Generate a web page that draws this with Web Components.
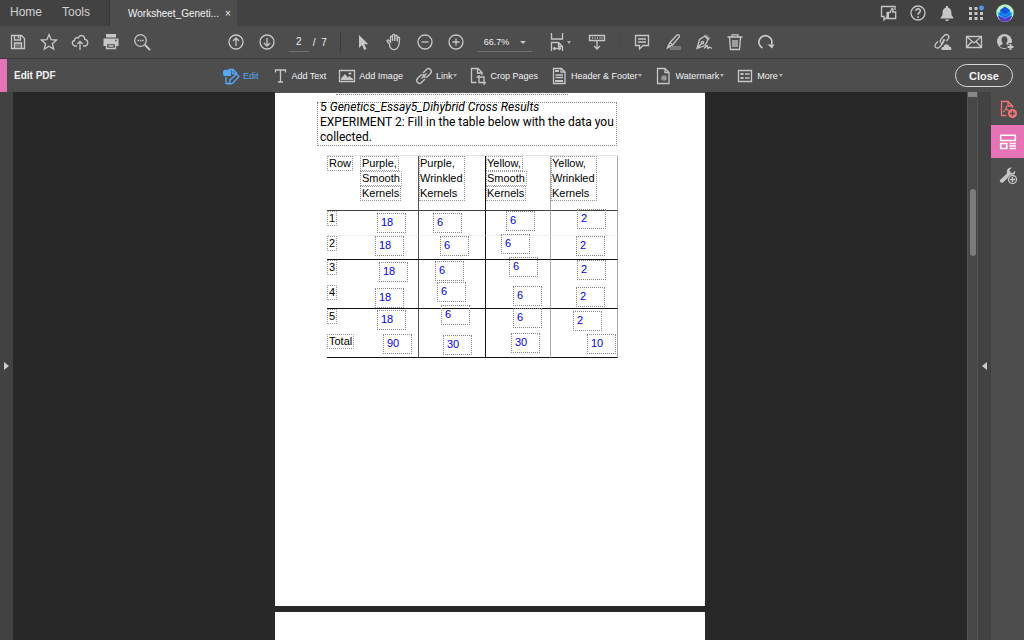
<!DOCTYPE html>
<html lang="en">
<head>
<meta charset="utf-8">
<title>Worksheet_Genetics.pdf</title>
<style>
    html, body {
        margin: 0;
        height: 100%;
        overflow: hidden;
        background-color: #282828;
        font-family: "Liberation Sans", Arial, sans-serif;
    }
</style>
</head>
<body>
<pdf-app></pdf-app>

<script>
// every icon is drawn in an 18x18 box
const icons = {
    save: `<path d="M2.5 2.5h10l3 3v10h-13z"/><path d="M5.5 2.5v4.500h6v-4.500M9.500 3v2.500"/><path class="dim" d="M5 10h8v5H5z"/><path d="M5.500 15v-5h7v5"/>`,
    star: `<path d="M9 1.600l2.100 5.100 5.500.4-4.200 3.600 1.300 5.400L9 13.200l-4.700 2.900 1.300-5.400L1.400 7.100l5.500-.4z"/>`,
    upload: `<path d="M6 13H4.300C.500 12.500.600 8 3.600 7.500 3.400 5 6 4 7.300 5 9 .8 14 2.500 13.700 6.300c4 .3 4 6.200.3 6.700h-2"/><path d="M9 17V8.500M6.300 11L9 8.300 11.700 11"/>`,
    print: `<path class="fill" d="M4 1h10v3.500H4zM1.500 5.500h15V13H14v-2.500H4V13H1.500z"/><path d="M4.500 10.500h9v5h-9zM6.500 13h5"/><path class="cut" d="M13 7.500h1.500"/>`,
    search: `<circle cx="7.500" cy="7.500" r="5.800"/><path d="M4.500 7.500h1.500M6.800 7.500h1.500M9.100 7.500h1.500"/><path class="thick" d="M12 12l5 5"/>`,
    up: `<circle cx="9" cy="9" r="7"/><path d="M9 13V5.500M6 8l3-3 3 3"/>`,
    down: `<circle cx="9" cy="9" r="7"/><path d="M9 5v7.500M6 10l3 3 3-3"/>`,
    pointer: `<path class="fill" d="M5 2v13l3-3 2.200 5 2.300-1-2.200-4.800h4z"/>`,
    hand: `<path d="M4.500 11L2.300 8.500c-1-1 .5-2 1.400-1.300L5.500 9V4.200c0-1.500 2-1.500 2 0V8 2.500c0-1.500 2.200-1.500 2.200 0V8l.2-5c.2-1.300 2.200-1.300 2.200 0V8.500l.5-3.500c.4-1.200 2-1 2 .3-.3 5-.4 10-4.600 11.200-4 .9-5.500-2.500-5.500-5.500z"/>`,
    minus: `<circle cx="9" cy="9" r="7"/><path d="M5.500 9h7"/>`,
    plus: `<circle cx="9" cy="9" r="7"/><path d="M5.500 9h7M9 5.500v7"/>`,
    fit: `<path d="M2.500 0v6h11V0M2.500 18V9.500h7l4 4V18M9.500 9.500v4h4M4.500 15.500h7M6 14l-1.500 1.500L6 17M10 14l1.500 1.500L10 17"/>`,
    keyboard: `<path d="M1.500 2.500h15v5h-15z"/><path d="M4 5h1M6.500 5h1M9 5h1M11.500 5h1M13.500 5h1"/><path d="M9 7.500V15M6 13l3 3 3-3"/>`,
    comment: `<path d="M2.500 2.500h13v10H10L6.500 16v-3.500h-4z"/><path d="M5 6h8M5 9h8"/>`,
    highlight: `<path class="dim" d="M6 13h11v4H6z"/><path d="M6 9.500L13 2c1.400-1 3 .5 2.300 1.800L8.500 12zM6 9.500L4 13.500l4.500-1.500"/><path class="fill" d="M4.500 12l2.500 1.800L2 16.500z"/>`,
    sign: `<path class="dim" d="M11 1l5 4-3 2-4-3z"/><path d="M9.500 2.500l4.500 4M10 3L4.500 6.500 2 15.500l8-3 3-6zM2 15.500l5-5.500"/><circle cx="7.500" cy="9.500" r="1.200"/><path d="M9 15.500l3-3 1 3 1.500-1.500 2.500 1.500"/>`,
    trash: `<path d="M1.500 4h15M6 4V1.800h6V4M3.500 4.500l1 12h9l1-12M7 7v7M9 7v7M11 7v7"/>`,
    rotate: `<path d="M5.500 15a6.500 6.500 0 1 1 9-3.500" style="stroke-width: 1.700"/><path class="fill" d="M10.500 11.500h7l-2.500 4z"/>`,
    linkCloud: `<path d="M6.500 9.500c-1-2 .2-3 1-4l2.800-3c2.400-2.500 6 .6 4 3.200L12.500 8M9 6.500c1.500 2 .4 3.300-1 4.700L5.500 14C3 16.500-.5 13.700 1.700 11L4 8.500M7 11l4-4.500"/><path class="fill" d="M8 17c-1.500-1 0-3.500 1.500-3 .5-3.500 5-3.500 5.500-.5 2.500 0 3 2.500 2 3.500z"/>`,
    mail: `<path d="M1.500 3.500h15v11h-15zM1.500 3.500L9 10l7.500-6.500M1.500 14.500l5.500-6M16.500 14.500l-5.500-6"/>`,
    addUser: `<circle class="fill" cx="8.500" cy="8.500" r="7.500"/><path class="cutFill" d="M5.500 6.500c0-4.500 6-4.500 6 0 0 2-.7 3-1.300 4 0 1.500 2 1.200 3.300 2.500-2.500 2.800-7.500 2.800-10 0 1.300-1.300 3.300-1 3.300-2.500-.6-1-1.300-2-1.300-4z"/><path class="cut wide" d="M14.500 10v8M10.500 14h8"/><path class="thick" d="M14.500 11v6M11.500 14h6"/>`,
    feedback: `<path d="M15 6V2.500H1.500v10H4V16l3.500-3.500"/><path d="M7.500 8.500H10L12 4.500c1.400 0 1.200 1.600.7 3.500h3v6.500H7.500z"/><path class="fill" d="M6.500 8H9v7H6.500z"/>`,
    help: `<circle cx="9" cy="9" r="7"/><path class="thick" d="M6.700 7c.2-3.200 5-2.700 4.500.2-.3 1.400-2.200 1.700-2.200 3.500M9 12.300v1.700" style="stroke-width: 1.600"/>`,
    bell: `<path class="fill" d="M8 2h2v1.500c3 1 3.500 3 3.500 7.500l2 3v.500h-13V14l2-3C4.500 6.500 5 4.500 8 3.500zM7 15.500h4L10 17H8z"/>`,
    apps: `<path class="fill" d="M2 3h3v3H2zM7.500 3h3v3h-3zM2 8h3v3H2zM7.500 8h3v3h-3zM13 8h3v3h-3zM2 13h3v3H2zM7.500 13h3v3h-3zM13 13h3v3h-3z"/><circle cx="14.500" cy="4" r="2.400" fill="#4b9bf5" stroke="none"/>`,
    avatar: `<g stroke="none"><circle cx="9" cy="9" r="8.700" fill="#b9f5c4"/><path fill="#25bdf0" d="M1.500 9l7.500-5 7.500 5-2 5H3.500z"/><path fill="#1455dd" d="M9 2.500l5 3.500-1 3 2.500 1-6.500 4-6.500-4L5 9 4 6z"/><path fill="#5a34cc" d="M2 11.500l7 3 7-3c-.5 3.500-3 6.200-7 6.200s-6.500-2.700-7-6.200z"/><path fill="#207fe8" d="M5 8l4 2 4-2v3l-4 2-4-2z"/></g>`,
    edit: `<path class="fill" d="M1 5c0-3 4-2 5.500-2H9v6H3C1 9 1 7.500 1 5z"/><path d="M6.500 2.500H11l4 4M10.500 2.500v4h4M4 10v6.500h4.500M8 13l6.500-6 2.500 2.500-6.500 7L7.500 17z"/>`,
    text: `<path d="M4.500 5.500V3h10v2.500M9.500 3v12M7 15h5"/>`,
    image: `<path d="M1.500 3.500h15v11h-15z"/><path class="fill" d="M3 13v-1.500L7 7l3 3.500 1.500-1.500 3.500 3V13zM12.500 5v1h1v1h-1v1h-1V7h-1V6h1V5z"/>`,
    link: `<path d="M8 6l3.500-3.500c2.500-2.500 6.500 1 4 4L12.500 9.500c-1.500 1.500-4 .8-4-1M10 12l-3.500 3.500c-2.500 2.500-6.500-1-4-4L5.500 8.500c1.500-1.500 4-.8 4 1M6.500 11.500l5-5"/>`,
    crop: `<path d="M7.500 15.500h-5v-14H9l4 4V8M8.500 1.500V6H13M7.500 10h7.500v8M10 8v7.500h7"/>`,
    header: `<path d="M3.500 1.500h8l3.500 3.500v11.500H3.500z"/><path d="M11 1.500V5h4"/><path class="fill" d="M5 3h4v2H5zM5 13h8v2H5z"/><path d="M5.500 8h7.500M5.500 10.500h7.500"/>`,
    watermark: `<path d="M3.500 1.500h7.500l4 4v11H3.500z"/><path d="M11 1.500V5.500h4"/><path class="faint" d="M10 8v6M7 11h6M7.800 9l4.300 4M12.100 9l-4.300 4"/>`,
    more: `<path d="M2.500 3.500h13v11h-13z"/><path class="fill" d="M4.500 6h3v2h-3zM4.500 10h3v2h-3z"/><path d="M9 7h4.500M9 11h4.500"/>`,
    createPdf: `<path d="M7.500 15.500h-5v-14H9l4.500 4.500v2M9 1.500V6h4.500"/><path d="M4 12c2-1 3.500-4 3.500-6M7 8c.5 2 1.500 2.500 3 3"/><circle class="fill" cx="13.500" cy="13.500" r="4.500"/><path class="cut" d="M11 13.500h5M13.500 11v5"/>`,
    organize: `<path d="M1.700 2.200h14.600v5.300H1.700zM1.700 10.500h6v5h-6z" style="stroke-width: 1.600"/><path d="M10.500 10.500H17M10.500 13H17M10.500 15.500H17"/>`,
    moreTools: `<path class="fill" d="M1 14L8 7.500C7 4 9.500 1 13 1.500L10.500 4l1 2.500 2.500.5 2-2.500c1 3-1.500 5.500-4.500 5L4 16.500C2 17.500 0 15.500 1 14z"/><circle class="cutFill" cx="13.500" cy="13.500" r="5"/><circle cx="13.500" cy="13.500" r="4"/><path d="M11 13.500h5M13.500 11v5"/>`
};

class AppIcon extends HTMLElement {
    constructor () {
        super ();
        this.attachShadow ({mode: "open"});
    }

    connectedCallback () {
        this.shadowRoot.innerHTML = `
        <style>
            :host { display: block; flex: none; width: 18px; height: 18px; }
            svg { display: block; width: 100%; height: 100%; fill: none; stroke: currentColor; stroke-width: 1.3; overflow: visible; }
            .fill { fill: currentColor; stroke: none; }
            .dim { fill: #777777; stroke: none; }
            .faint { stroke: #999999; }
            .thick { stroke-width: 2; }
            .cut { stroke: var(--cut, #4d4d4d); }
            .wide { stroke-width: 4; }
            .cutFill { fill: var(--cut, #4d4d4d); stroke: none; }
        </style>
        <svg viewBox="0 0 18 18" aria-hidden="true">${icons[this.getAttribute ("name")]}</svg>`;
    }
}

// button with an icon, an optional slotted text and an optional menu arrow
class ToolButton extends HTMLElement {
    constructor () {
        super ();
        this.attachShadow ({mode: "open"});
    }

    connectedCallback () {
        const label = this.getAttribute ("label");
        this.shadowRoot.innerHTML = `
        <style>
            :host { display: block; flex: none; color: #c6c6c6; }
            :host([menu]) .arrow { display: block; }
            button {
                display: flex;
                align-items: center;
                gap: var(--gap, 0px);
                padding: 0;
                border: 0;
                background: none;
                color: inherit;
                font: inherit;
                cursor: pointer;
            }
            .text { color: var(--text, inherit); white-space: nowrap; display: flex; align-items: center; gap: 1px; }
            .arrow {
                display: none;
                border: 2px solid transparent;
                border-top: 3px solid #b0b0b0;
                border-bottom: 0;
            }
        </style>
        <button type="button" ${label ? `aria-label="${label}"` : ""}>
            <app-icon name="${this.getAttribute ("icon")}"></app-icon>
            <span class="text"><slot></slot><span class="arrow"></span></span>
        </button>`;
    }
}

class TabBar extends HTMLElement {
    constructor () {
        super ();
        this.attachShadow ({mode: "open"});
        this.shadowRoot.innerHTML = `
        <style>
            :host { display: flex; height: 26px; background-color: #424242; color: #d0d0d0; font-size: 12px; }
            nav { display: flex; gap: 20px; padding: 0 19px 0 10px; align-items: center; }
            nav a { color: inherit; text-decoration: none; line-height: 25px; height: 26px; }
            .tab {
                display: flex;
                align-items: center;
                gap: 5px;
                padding: 0 5px 0 18px;
                border-left: 1px solid #373737;
                background-color: #4d4d4d;
                color: #f2f2f2;
                font-size: 10px;
            }
            .tab button { border: 0; padding: 0; width: 8px; background: none; color: inherit; font: inherit; }
            .right { display: flex; align-items: center; gap: 11px; margin-left: auto; padding-right: 10px; --cut: #424242; }
        </style>
        <nav><a href="#home">Home</a><a href="#tools">Tools</a></nav>
        <div class="tab"><span>Worksheet_Geneti...</span><button type="button" aria-label="Close tab">×</button></div>
        <div class="right">
            <tool-button icon="feedback" label="Feedback"></tool-button>
            <tool-button icon="help" label="Help"></tool-button>
            <tool-button icon="bell" label="Notifications"></tool-button>
            <tool-button icon="apps" label="Apps"></tool-button>
            <tool-button icon="avatar" label="Account"></tool-button>
        </div>`;
    }
}

class MainToolbar extends HTMLElement {
    constructor () {
        super ();
        this.attachShadow ({mode: "open"});
        this.shadowRoot.innerHTML = `
        <style>
            :host {
                display: flex;
                align-items: center;
                height: 32px;
                padding: 0 10px 0 9px;
                background-color: #4d4d4d;
                border-bottom: 1px solid #3b3b3b;
                color: #eeeeee;
                font-size: 10px;
            }
            .group { display: flex; align-items: center; gap: 13px; }
            .space { flex: 10; }
            .space.large { flex: 21; }
            .page, .zoom { display: flex; align-items: center; }
            .page { gap: 4px; white-space: pre; }
            input, select {
                box-sizing: border-box;
                height: 20px;
                border: 0;
                border-bottom: 1px solid #717171;
                padding: 0;
                background: none;
                color: inherit;
                font: inherit;
                appearance: none;
            }
            input { width: 20px; text-align: center; }
            select { width: 54px; padding-left: 6px; font-size: 9px; }
            .zoom { position: relative; }
            .zoom::after {
                content: "";
                position: absolute;
                right: 6px;
                border: 3px solid transparent;
                border-top-color: #c6c6c6;
                border-bottom: 0;
            }
            tool-button[menu] { margin: 0 4px; }
            .line { width: 1px; height: 20px; background-color: #3d3d3d; }
            .line.light { background-color: #484848; }
        </style>
        <div class="group">
            <tool-button icon="save" label="Save"></tool-button>
            <tool-button icon="star" label="Star"></tool-button>
            <tool-button icon="upload" label="Upload"></tool-button>
            <tool-button icon="print" label="Print"></tool-button>
            <tool-button icon="search" label="Find"></tool-button>
        </div>
        <div class="space"></div>
        <div class="group">
            <tool-button icon="up" label="Previous page"></tool-button>
            <tool-button icon="down" label="Next page"></tool-button>
            <div class="page"><input aria-label="Page" value="2"><span>/  7</span></div>
            <div class="line"></div>
            <tool-button icon="pointer" label="Select"></tool-button>
            <tool-button icon="hand" label="Pan"></tool-button>
            <tool-button icon="minus" label="Zoom out"></tool-button>
            <tool-button icon="plus" label="Zoom in"></tool-button>
            <div class="zoom"><select aria-label="Zoom"><option>66.7%</option></select></div>
            <tool-button icon="fit" label="Fit width" menu></tool-button>
            <tool-button icon="keyboard" label="Page controls"></tool-button>
            <div class="line light"></div>
            <tool-button icon="comment" label="Comment"></tool-button>
            <tool-button icon="highlight" label="Highlight"></tool-button>
            <tool-button icon="sign" label="Sign"></tool-button>
            <tool-button icon="trash" label="Delete"></tool-button>
            <tool-button icon="rotate" label="Rotate"></tool-button>
        </div>
        <div class="space large"></div>
        <div class="group">
            <tool-button icon="linkCloud" label="Share link"></tool-button>
            <tool-button icon="mail" label="Send by email"></tool-button>
            <tool-button icon="addUser" label="Invite"></tool-button>
        </div>`;
    }
}

class EditBar extends HTMLElement {
    constructor () {
        super ();
        this.attachShadow ({mode: "open"});
        this.shadowRoot.innerHTML = `
        <style>
            :host {
                display: flex;
                align-items: center;
                justify-content: space-between;
                height: 33px;
                padding: 0 11px 0 7px;
                border-left: 7px solid #e573b5;
                background-color: #4d4d4d;
                color: #f2f2f2;
                font-size: 9px;
            }
            h1 { margin: 0; font-size: 10px; }
            .tools { display: flex; gap: 12px; margin-right: 6px; --gap: 3px; --text: #f2f2f2; }
            .active { color: #55a9f8; --text: #55a9f8; }
            .close {
                width: 58px;
                height: 23px;
                padding: 0;
                border: 1px solid #d8d8d8;
                border-radius: 12px;
                background: none;
                color: inherit;
                font: bold 11px "Liberation Sans", Arial, sans-serif;
            }
        </style>
        <h1>Edit PDF</h1>
        <div class="tools">
            <tool-button class="active" icon="edit">Edit</tool-button>
            <tool-button icon="text">Add Text</tool-button>
            <tool-button icon="image">Add Image</tool-button>
            <tool-button icon="link" menu>Link</tool-button>
            <tool-button icon="crop">Crop Pages</tool-button>
            <tool-button icon="header" menu>Header &amp; Footer</tool-button>
            <tool-button icon="watermark" menu>Watermark</tool-button>
            <tool-button icon="more" menu>More</tool-button>
        </div>
        <button class="close" type="button">Close</button>`;
    }
}

// each value is a text box dropped freely on the page : [text, x, y] from its cell corner
const rows = [
    ["1", ["18", 17, 2], ["6", 14, 2], ["6", 20, 0], ["2", 26, -2]],
    ["2", ["18", 15, 0], ["6", 21, 0], ["6", 15, -2], ["2", 25, 0]],
    ["3", ["18", 19, 2], ["6", 16, 1], ["6", 23, -3], ["2", 26, 0]],
    ["4", ["18", 15, 3], ["6", 18, -3], ["6", 27, 1], ["2", 25, 2]],
    ["5", ["18", 17, 1], ["6", 22, -4], ["6", 27, -1], ["2", 22, 2]],
    ["Total", ["90", 23, 0], ["30", 24, 1], ["30", 25, -1], ["10", 36, 0]]
];

class ResultsTable extends HTMLElement {
    constructor () {
        super ();
        this.attachShadow ({mode: "open"});
    }

    connectedCallback () {
        let body = "";
        rows.forEach (([name, ...values]) => {
            body += `<tr><th scope="row"><span class="box">${name}</span></th>`;
            values.forEach (([text, x, y]) => {
                body += `<td><span class="note" style="--x: ${x}px; --y: ${y}px">${text}</span></td>`;
            });
            body += "</tr>";
        });

        this.shadowRoot.innerHTML = `
        <style>
            :host { display: block; }
            table {
                width: 291px;
                table-layout: fixed;
                border-collapse: separate;
                border-spacing: 0;
                border-top: 1px solid #e4e4e4;
                font-size: 11px;
                line-height: 15px;
            }
            col:nth-child(1) { width: 33px; }
            col:nth-child(2) { width: 59px; }
            col:nth-child(3) { width: 67px; }
            col:nth-child(4) { width: 65px; }
            th, td { box-sizing: border-box; padding: 0; text-align: left; vertical-align: top; font-weight: normal; }
            thead th { height: 55px; border-bottom: 1px solid #444444; }
            tbody th, td { height: 25px; }
            tbody tr:nth-child(1) > * { border-bottom: 1px solid #eeeeee; }
            tbody tr:nth-child(even) > * { height: 24px; border-bottom: 1px solid #111111; }
            tr > :nth-child(2) { border-right: 1px solid #555555; }
            tr > :nth-child(3) { border-right: 1px solid #111111; }
            tr > :nth-child(4) { border-right: 1px solid #aaaaaa; }
            tr > :nth-child(5) { border-right: 1px solid #aaaaaa; }
            .box { outline: 1px dotted #999999; outline-offset: -1px; display: block; width: fit-content; padding: 0 2px; }
            thead th:nth-child(n + 3) .box { padding-left: 1px; }
            td { position: relative; }
            .note {
                position: absolute;
                left: var(--x);
                top: var(--y);
                box-sizing: border-box;
                width: 29px;
                height: 20px;
                padding-left: 3px;
                border: 1px dotted #888888;
                color: #0000ee;
                line-height: 17px;
            }
        </style>
        <table>
            <colgroup><col><col><col><col><col></colgroup>
            <thead>
                <tr>
                    <th scope="col"><span class="box">Row</span></th>
                    <th scope="col"><span class="box">Purple,</span><span class="box">Smooth</span><span class="box">Kernels</span></th>
                    <th scope="col"><span class="box">Purple,<br>Wrinkled<br>Kernels</span></th>
                    <th scope="col"><span class="box">Yellow,</span><span class="box">Smooth</span><span class="box">Kernels</span></th>
                    <th scope="col"><span class="box">Yellow,<br>Wrinkled<br>Kernels</span></th>
                </tr>
            </thead>
            <tbody>${body}</tbody>
        </table>`;
    }
}

class PdfViewer extends HTMLElement {
    constructor () {
        super ();
        this.attachShadow ({mode: "open"});
        this.shadowRoot.innerHTML = `
        <style>
            :host { display: flex; flex: 1; min-height: 0; background-color: #282828; color: #000000; }
            .side { display: flex; align-items: center; justify-content: center; padding: 0; border: 0; width: 13px; background-color: #424242; }
            .side span { border: 4px solid transparent; }
            .left span { border-left: 5px solid #cccccc; border-right: 0; }
            .right span { border-right: 5px solid #cccccc; border-left: 0; }
            .document { flex: 1; display: flex; flex-direction: column; align-items: center; gap: 6px; overflow: hidden; }
            .page {
                flex: none;
                box-sizing: border-box;
                width: 45%;
                min-width: 430px;
                height: 514px;
                padding: 0 42px;
                border-top: 1px solid #555555;
                background-color: #ffffff;
            }
            .page + .page { border: 0; }
            .above { width: 232px; height: 1px; border-bottom: 1px dotted #888888; margin: 0 0 7px 19px; }
            .intro {
                margin: 0 0 9px;
                width: fit-content;
                padding: 0 0 0 2px;
                border: 1px dotted #888888;
                font: 12px/15px Roboto, sans-serif;
            }
            .intro p { margin: 0; max-width: 296px; }
            .intro p:first-child { margin-top: -3px; }
            results-table { margin-left: 10px; }
            .scroll { box-sizing: border-box; width: 11px; background-color: #474747; border-left: 1px solid #535353; border-right: 1px solid #535353; display: flex; flex-direction: column; align-items: center; }
            .cap { width: 9px; height: 5px; background-color: #888888; }
            .thumb { width: 6px; height: 67px; margin-top: 92px; border-radius: 3px; background-color: #7c7c7c; }
            aside { width: 33px; background-color: #4d4d4d; }
            aside div { display: flex; justify-content: center; align-items: center; height: 33px; }
            aside .red tool-button { color: #f07575; }
            aside .pink { background-color: #e573b5; }
            aside .pink tool-button { color: #ffffff; }
        </style>
        <button class="side left" type="button" aria-label="Open left panel"><span></span></button>
        <div class="document">
            <div class="page">
                <div class="above"></div>
                <div class="intro">
                    <p>5 <i>Genetics_Essay5_Dihybrid Cross Results</i></p>
                    <p>EXPERIMENT 2: Fill in the table below with the data you collected.</p>
                </div>
                <results-table></results-table>
            </div>
            <div class="page"></div>
        </div>
        <div class="scroll"><div class="cap"></div><div class="thumb"></div></div>
        <button class="side right" type="button" aria-label="Close right panel"><span></span></button>
        <aside>
            <div class="red"><tool-button icon="createPdf" label="Create PDF"></tool-button></div>
            <div class="pink"><tool-button icon="organize" label="Edit PDF"></tool-button></div>
            <div><tool-button icon="moreTools" label="More tools"></tool-button></div>
        </aside>`;
    }
}

class PdfApp extends HTMLElement {
    constructor () {
        super ();
        this.attachShadow ({mode: "open"});
        this.shadowRoot.innerHTML = `
        <style>
            :host { display: flex; flex-direction: column; height: 100vh; }
        </style>
        <tab-bar></tab-bar>
        <main-toolbar></main-toolbar>
        <edit-bar></edit-bar>
        <pdf-viewer></pdf-viewer>`;
    }
}

customElements.define ("app-icon", AppIcon);
customElements.define ("tool-button", ToolButton);
customElements.define ("tab-bar", TabBar);
customElements.define ("main-toolbar", MainToolbar);
customElements.define ("edit-bar", EditBar);
customElements.define ("results-table", ResultsTable);
customElements.define ("pdf-viewer", PdfViewer);
customElements.define ("pdf-app", PdfApp);
</script>
</body>
</html>
